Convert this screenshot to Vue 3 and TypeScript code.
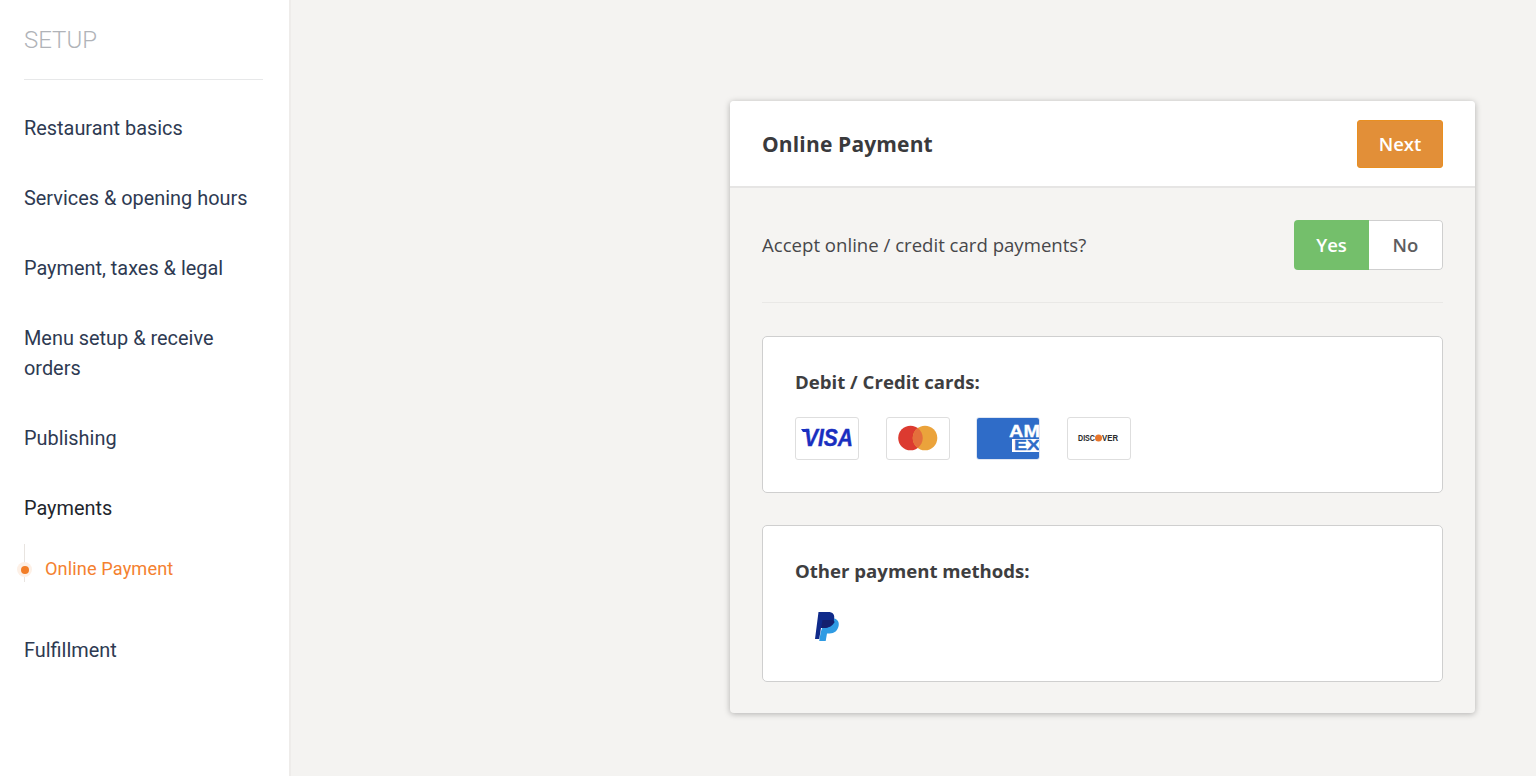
<script setup lang="ts">
const navTop: string[] = [
  'Restaurant basics',
  'Services & opening hours',
  'Payment, taxes & legal',
  'Menu setup & receive orders',
  'Publishing',
]
</script>

<template>
  <div class="page">
    <aside class="sidebar">
      <div class="setup">SETUP</div>
      <nav class="nav">
        <a v-for="item in navTop" :key="item" class="nav-item">{{ item }}</a>
        <a class="nav-item active">Payments</a>
        <div class="sub">
          <span class="marker"><span class="dot"></span></span>
          <span class="sub-label">Online Payment</span>
        </div>
        <a class="nav-item">Fulfillment</a>
      </nav>
    </aside>

    <main class="main">
      <section class="card">
        <header class="card-head">
          <h1 class="title">Online Payment</h1>
          <button class="next" type="button">Next</button>
        </header>
        <div class="card-body">
          <div class="accept">
            <span class="accept-label">Accept online / credit card payments?</span>
            <div class="toggle">
              <span class="yes">Yes</span>
              <span class="no">No</span>
            </div>
          </div>
          <hr class="divider" />
          <div class="box box-first">
            <h2 class="box-title">Debit / Credit cards:</h2>
            <div class="logos">
              <div class="logo">
                <svg width="64" height="42" viewBox="0 0 64 42">
                  <path d="M6 12h7l1.500 3H8z" fill="#1a2fc0" />
                  <text x="9" y="29" textLength="49" lengthAdjust="spacingAndGlyphs" class="visa-text">VISA</text>
                </svg>
              </div>
              <div class="logo">
                <svg width="64" height="42" viewBox="0 0 64 42">
                  <circle cx="24.500" cy="21" r="12.300" fill="#dc3a30" />
                  <circle cx="39" cy="21" r="12.300" fill="#eba33b" />
                  <path d="M31.750 11.100a12.300 12.300 0 0 1 0 19.800a12.300 12.300 0 0 1 0-19.800z" fill="#e46e3c" />
                </svg>
              </div>
              <div class="logo logo-amex">
                <svg width="64" height="42" viewBox="0 0 64 42">
                  <rect width="64" height="42" fill="#2f6cc8" />
                  <rect x="36" y="22" width="28" height="13" fill="#fff" />
                  <text x="33" y="20" textLength="31" lengthAdjust="spacingAndGlyphs" class="amex-text amex-top">AM</text>
                  <text x="38" y="33" textLength="26" lengthAdjust="spacingAndGlyphs" class="amex-text amex-bottom">EX</text>
                </svg>
              </div>
              <div class="logo">
                <svg width="64" height="42" viewBox="0 0 64 42">
                  <circle cx="31.500" cy="21" r="3.500" fill="#e8762c" />
                  <text x="11" y="24" textLength="17" lengthAdjust="spacingAndGlyphs" class="disc-text">DISC</text>
                  <text x="35" y="24" textLength="16" lengthAdjust="spacingAndGlyphs" class="disc-text">VER</text>
                </svg>
              </div>
            </div>
          </div>
          <div class="box">
            <h2 class="box-title">Other payment methods:</h2>
            <div class="logos">
              <svg class="paypal" width="64" height="42" viewBox="0 0 64 42">
                <path d="M31 12h5c5 0 8.500 2.500 7.700 7.500c-.8 5-4.300 8-9.200 8h-2.500l-1.300 7.500h-6.500l1.500-9z" fill="#2f9be3" />
                <path d="M23.500 6h9.500c5 0 7 2.500 6 7.500c-1 5.500-5 8.500-10 8.500h-3l-1.800 11h-4.200z" fill="#0f2a8a" />
                <path d="M27.500 14h10.800c.6.600 1 1.200 1.300 2c-1.800 3.800-5.600 6-10.600 6h-2.900z" fill="#14206e" />
              </svg>
            </div>
          </div>
        </div>
      </section>
    </main>
  </div>
</template>

<style>
html,
body {
  margin: 0;
  background: #f4f3f1;
}
</style>

<style scoped>
.page {
  display: flex;
  height: 776px;
  overflow: hidden;
  background: #f4f3f1;
}

.sidebar {
  box-sizing: border-box;
  width: 291px;
  flex: none;
  height: 100%;
  padding: 25px 26px 0 24px;
  background: #fff;
  border-right: 2px solid #eeecea;
  font-family: Roboto, sans-serif;
}

.setup {
  height: 30px;
  line-height: 30px;
  font-size: 24px;
  font-weight: 300;
  color: #b0b3b8;
  padding-bottom: 24px;
  border-bottom: 1px solid #e7e8e9;
}

.nav {
  display: flex;
  flex-direction: column;
  padding-top: 34px;
}

.nav-item {
  display: block;
  font-size: 19.900px;
  line-height: 30px;
  color: #2e3a52;
  padding-bottom: 40px;
}

.nav-item.active {
  color: #22262d;
  padding-bottom: 20px;
}

.sub {
  position: relative;
  display: flex;
  align-items: flex-end;
  height: 38px;
  margin-bottom: 54px;
  padding-left: 21px;
}

.sub::before {
  content: '';
  position: absolute;
  left: 0;
  top: 0;
  bottom: 0;
  border-left: 1px solid #e8e4e0;
}

.marker {
  position: absolute;
  left: -7px;
  top: 18px;
  width: 15px;
  height: 15px;
  border-radius: 50%;
  background: #fdf0e6;
  display: flex;
  align-items: center;
  justify-content: center;
}

.dot {
  width: 8px;
  height: 8px;
  border-radius: 50%;
  background: #f27d26;
}

.sub-label {
  font-size: 18.200px;
  letter-spacing: 0.1px;
  line-height: 26px;
  color: #f4812f;
}

.main {
  flex: 1;
  padding: 101px 61px 0 439px;
  min-width: 0;
}

.card {
  box-sizing: border-box;
  height: 612px;
  border-radius: 4px;
  background: #f5f4f2;
  box-shadow: 0 1px 6px rgba(0, 0, 0, 0.28);
  font-family: 'Open Sans', sans-serif;
  overflow: hidden;
}

.card-head {
  box-sizing: border-box;
  height: 87px;
  display: flex;
  align-items: center;
  justify-content: space-between;
  padding: 0 32px;
  background: #fff;
  border-bottom: 2px solid #e6e5e4;
}

.title {
  margin: 0;
  font-size: 21px;
  letter-spacing: 0.15px;
  font-weight: 700;
  color: #3a3a3c;
}

.next {
  box-sizing: border-box;
  width: 86px;
  height: 48px;
  border: 1px solid #e98f20;
  border-radius: 3px;
  background: #e28f38;
  color: #fff;
  font-family: 'Open Sans', sans-serif;
  font-size: 18.500px;
  font-weight: 600;
  padding: 0;
}

.card-body {
  padding: 32px 32px 0;
}

.accept {
  display: flex;
  align-items: center;
  justify-content: space-between;
  height: 50px;
}

.accept-label {
  font-size: 18.600px;
  line-height: 26px;
  padding-bottom: 1px;
  color: #47474a;
}

.toggle {
  box-sizing: border-box;
  display: flex;
  width: 149px;
  height: 50px;
  border-radius: 4px;
  overflow: hidden;
  font-size: 18.500px;
  font-weight: 600;
}

.yes {
  box-sizing: border-box;
  width: 75px;
  padding-bottom: 2px;
  background: #74bf6b;
  color: #fff;
  display: flex;
  align-items: center;
  justify-content: center;
}

.no {
  box-sizing: border-box;
  flex: 1;
  padding-bottom: 2px;
  background: #fff;
  color: #5d5d60;
  border: 1.500px solid #cfcfcf;
  border-left: 0;
  border-radius: 0 4px 4px 0;
  display: flex;
  align-items: center;
  justify-content: center;
}

.divider {
  margin: 32px 0 33px;
  border: 0;
  border-top: 1.500px solid #e9e8e6;
}

.box {
  box-sizing: border-box;
  height: 157px;
  padding: 32px 32px 0;
  background: #fff;
  border: 1.500px solid #cfcfcf;
  border-radius: 5px;
}

.box-first {
  margin-bottom: 32px;
}

.box-title {
  margin: 0 0 21.500px;
  font-size: 18.600px;
  line-height: 26px;
  font-weight: 700;
  color: #3e3e40;
}

.logos {
  display: flex;
  gap: 26.500px;
}

.logo {
  box-sizing: border-box;
  width: 64px;
  height: 43px;
  background: #fff;
  border: 1.500px solid #dedede;
  border-radius: 3px;
  overflow: hidden;
  display: flex;
  align-items: center;
  justify-content: center;
}

.logo svg {
  flex: none;
}

.logo-amex {
  border-color: #dfe6f2;
}

.visa-text {
  font-family: 'Liberation Sans', sans-serif;
  font-size: 23.700px;
  font-weight: 700;
  font-style: italic;
  fill: #1a2fc0;
  stroke: #1a2fc0;
  stroke-width: 0.4px;
}

.amex-text {
  font-family: 'Liberation Sans', sans-serif;
  font-weight: 700;
}

.amex-top {
  font-size: 17px;
  fill: #fff;
  stroke: #fff;
  stroke-width: 0.3px;
}

.amex-bottom {
  font-size: 14px;
  fill: #2f6cc8;
  stroke: #2f6cc8;
  stroke-width: 0.3px;
}

.disc-text {
  font-family: 'Liberation Sans', sans-serif;
  font-size: 8.500px;
  font-weight: 700;
  fill: #2b2b2b;
}

.paypal {
  display: block;
}
</style>
